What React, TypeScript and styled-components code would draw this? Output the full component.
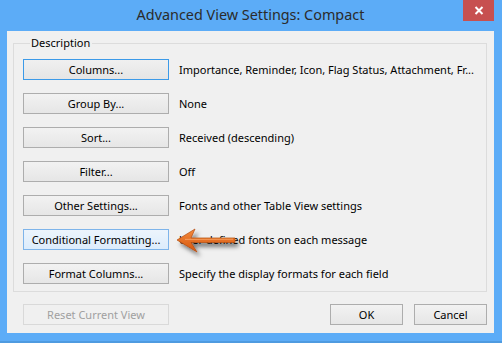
import React from 'react'
import styled, { createGlobalStyle, css } from 'styled-components'

const Global = createGlobalStyle`
  html, body {
    margin: 0;
    padding: 0;
    background: #ffffff;
  }
  body {
    font-family: "Noto Sans", "Open Sans", sans-serif;
    font-size: 11px;
    color: #000;
  }
`

const Frame = styled.div`
  width: 502px;
  height: 343px;
  box-sizing: border-box;
  background: #5cacf7;
  border-bottom: 2px solid #4f9be0;
  display: flex;
  flex-direction: column;
  padding: 0 8px 8px 7px;
`

const TitleBar = styled.div`
  height: 31px;
  display: grid;
  grid-template-columns: 31px 1fr 31px;
  align-items: start;
`

const Title = styled.div`
  grid-column: 2;
  text-align: center;
  font-size: 14.4px;
  line-height: 30px;
  color: #2b2b2b;
`

const CloseButton = styled.div`
  grid-column: 3;
  width: 31px;
  height: 21px;
  background: #c75050;
  display: flex;
  align-items: center;
  justify-content: center;
`

const Client = styled.div`
  flex: 1;
  background: #f0f0f0;
  padding: 5px 7px 8px 6px;
  display: flex;
  flex-direction: column;
`

const Group = styled.fieldset`
  margin: 0;
  padding: 9px 9px 8px 9px;
  border: 1px solid #dcdcdc;
  height: 256px;
  box-sizing: border-box;
  display: flex;
  flex-direction: column;
  gap: 13px;
  min-width: 0;
`

const Legend = styled.legend`
  padding: 0 2px 0 1px;
  margin-left: 7px;
  font-size: 11px;
  line-height: 14px;
`

const Row = styled.div`
  position: relative;
  display: flex;
  align-items: center;
  gap: 10px;
  height: 21px;
`

type BtnState = 'normal' | 'focus' | 'hover' | 'disabled'

const Button = styled.div<{ $state?: BtnState; $w: number }>`
  width: ${p => p.$w}px;
  height: 21px;
  box-sizing: border-box;
  border: 1px solid #adadad;
  background: linear-gradient(#f2f2f2, #e6e6e6);
  display: flex;
  align-items: center;
  justify-content: center;
  font-size: 11px;
  color: #000;
  flex-shrink: 0;
  ${p =>
    p.$state === 'focus' &&
    css`
      border-color: #3c9ae8;
      background: linear-gradient(#f0f0f0, #e5e5e5);
    `}
  ${p =>
    p.$state === 'hover' &&
    css`
      border-color: #7eb4ea;
      background: linear-gradient(#ecf4fc, #dcecfc);
    `}
  ${p =>
    p.$state === 'disabled' &&
    css`
      border-color: #d9d9d9;
      background: #f0f0f0;
      color: #a0a0a0;
    `}
`

const Desc = styled.div`
  white-space: nowrap;
  font-size: 11px;
`

const Footer = styled.div`
  display: flex;
  align-items: center;
  gap: 11px;
  margin-top: 12px;
  padding-left: 10px;
`

const Spacer = styled.div`
  flex: 1;
`

// callout arrow drawn over the "Conditional Formatting" description
const Arrow = styled.svg`
  position: absolute;
  left: 150px;
  top: -6px;
  overflow: visible;
  pointer-events: none;
`

const rows: { label: string; desc: string; state?: BtnState; arrow?: boolean }[] = [
  { label: 'Columns...', desc: 'Importance, Reminder, Icon, Flag Status, Attachment, Fr...', state: 'focus' },
  { label: 'Group By...', desc: 'None' },
  { label: 'Sort...', desc: 'Received (descending)' },
  { label: 'Filter...', desc: 'Off' },
  { label: 'Other Settings...', desc: 'Fonts and other Table View settings' },
  { label: 'Conditional Formatting...', desc: 'User defined fonts on each message', state: 'hover', arrow: true },
  { label: 'Format Columns...', desc: 'Specify the display formats for each field' },
]

const CalloutArrow = () => (
  <Arrow width="80" height="36" viewBox="0 0 80 36">
    <defs>
      <filter id="sh" x="-20%" y="-40%" width="150%" height="200%">
        <feDropShadow dx="3" dy="4" stdDeviation="2" floodColor="#000" floodOpacity="0.5" />
      </filter>
      <linearGradient id="og" x1="0" y1="0" x2="0" y2="1">
        <stop offset="0" stopColor="#f58a3c" />
        <stop offset="1" stopColor="#d4560e" />
      </linearGradient>
    </defs>
    <g filter="url(#sh)">
      <path
        d="M4 17 L22 6 L18 15 L62 15 L62 19.5 L18 19.5 L24 29 Z"
        fill="url(#og)"
        stroke="#b24a10"
        strokeWidth="0.7"
        strokeLinejoin="round"
      />
    </g>
    <path d="M12 16.4 L60 16.2" stroke="#fbb47e" strokeWidth="0.8" opacity="0.8" />
  </Arrow>
)

export default function App() {
  return (
    <>
      <Global />
      <Frame>
        <TitleBar>
          <Title>Advanced View Settings: Compact</Title>
          <CloseButton>
            <svg width="10" height="9" viewBox="0 0 10 9">
              <path d="M1.5 1 L8.5 8 M8.5 1 L1.5 8" stroke="#fff" strokeWidth="2" />
            </svg>
          </CloseButton>
        </TitleBar>
        <Client>
          <Group>
            <Legend>Description</Legend>
            {rows.map(r => (
              <Row key={r.label}>
                <Button $w={146} $state={r.state}>{r.label}</Button>
                <Desc>{r.desc}</Desc>
                {r.arrow && <CalloutArrow />}
              </Row>
            ))}
          </Group>
          <Footer>
            <Button $w={146} $state="disabled">Reset Current View</Button>
            <Spacer />
            <Button $w={73}>OK</Button>
            <Button $w={73}>Cancel</Button>
          </Footer>
        </Client>
      </Frame>
    </>
  )
}
